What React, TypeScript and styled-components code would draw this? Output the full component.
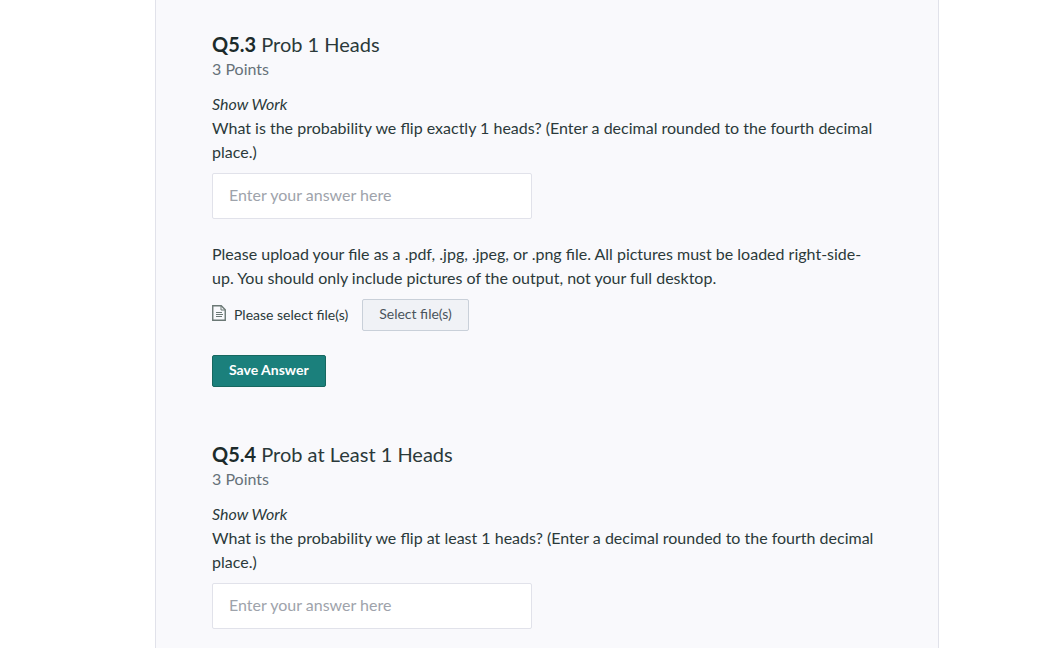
import React from "react";
import styled, { createGlobalStyle } from "styled-components";

const GlobalStyle = createGlobalStyle`
  *, *::before, *::after { box-sizing: border-box; }
  body {
    margin: 0;
    background: #ffffff;
    color: #2b393a;
    font-family: Lato, "Liberation Sans", sans-serif;
    font-size: 16px;
    font-weight: 400;
    line-height: 24px;
  }
`;

const Page = styled.div`
  display: flex;
  justify-content: center;
  min-height: 100vh;
  padding-left: 30px;
`;

const Outline = styled.main`
  display: flex;
  flex-direction: column;
  gap: 55px;
  width: 100%;
  max-width: 784px;
  padding: 32px 56px 0;
  background: #f9f9fc;
  border: solid #e1e2ea;
  border-width: 0 1px;
`;

const Question = styled.section`
  display: flex;
  flex-direction: column;
`;

const Title = styled.h2`
  margin: 0;
  font-size: 20px;
  font-weight: 400;
  line-height: 25px;

  b {
    color: #1c2b2b;
    font-weight: 700;
  }
`;

const Points = styled.p`
  margin: 0 0 12px;
  color: #667179;
  line-height: 23px;
`;

const Prompt = styled.p`
  margin: 0 0 9px;
`;

const AnswerInput = styled.input`
  width: 320px;
  max-width: 100%;
  height: 46px;
  padding: 0 16px 3px;
  border: 1px solid #e1e2ea;
  border-radius: 2px;
  background: #ffffff;
  color: inherit;
  font: inherit;

  &::placeholder {
    color: #9ea3ab;
    opacity: 1;
  }
`;

const Upload = styled.div`
  margin: 23px 0 24px;
`;

const FileRow = styled.div`
  display: flex;
  align-items: center;
  font-size: 14px;
`;

const FileIcon = styled.svg`
  width: 14px;
  height: 16px;
  margin: 0 8px 4px 0;
`;

const FileLabel = styled.span`
  margin-right: 14px;
`;

const Button = styled.button<{ $primary?: boolean }>`
  align-self: flex-start;
  height: 32px;
  padding: 0 16px 3px;
  border: 1px solid ${(p) => (p.$primary ? "#176860" : "#c9d0d9")};
  border-radius: 2px;
  background: ${(p) => (p.$primary ? "#1b807c" : "#f0f2f6")};
  color: ${(p) => (p.$primary ? "#ffffff" : "#4a545c")};
  font-family: inherit;
  font-size: 14px;
  font-weight: ${(p) => (p.$primary ? 700 : 400)};
  cursor: pointer;
`;

type QuestionData = {
  id: string;
  title: string;
  points: string;
  prompt: string;
  upload?: string;
};

const questions: QuestionData[] = [
  {
    id: "Q5.3",
    title: "Prob 1 Heads",
    points: "3 Points",
    prompt:
      "What is the probability we flip exactly 1 heads? (Enter a decimal rounded to the fourth decimal place.)",
    upload:
      "Please upload your file as a .pdf, .jpg, .jpeg, or .png file. All pictures must be loaded right-side-up. You should only include pictures of the output, not your full desktop.",
  },
  {
    id: "Q5.4",
    title: "Prob at Least 1 Heads",
    points: "3 Points",
    prompt:
      "What is the probability we flip at least 1 heads? (Enter a decimal rounded to the fourth decimal place.)",
  },
];

function DocumentIcon() {
  return (
    <FileIcon viewBox="0 0 14 16" fill="none" stroke="#6b7875" aria-hidden="true">
      <path d="M.75.75h8.5l4 4v10.5H.75z" strokeWidth="1.4" />
      <path d="M9 1v4h4" />
      <path d="M4 7.5h6M4 9.5h7M4 11.5h6" />
    </FileIcon>
  );
}

function QuestionBlock({ question }: { question: QuestionData }) {
  const inputId = `answer-${question.id}`;
  return (
    <Question>
      <Title>
        <b>{question.id}</b> {question.title}
      </Title>
      <Points>{question.points}</Points>
      <Prompt>
        <em>Show Work</em>
        <br />
        <label htmlFor={inputId}>{question.prompt}</label>
      </Prompt>
      <AnswerInput id={inputId} type="text" placeholder="Enter your answer here" />
      {question.upload && (
        <>
          <Upload>
            <Prompt>{question.upload}</Prompt>
            <FileRow>
              <DocumentIcon />
              <FileLabel>Please select file(s)</FileLabel>
              <Button type="button">Select file(s)</Button>
            </FileRow>
          </Upload>
          <Button type="submit" $primary>
            Save Answer
          </Button>
        </>
      )}
    </Question>
  );
}

export default function App() {
  return (
    <>
      <GlobalStyle />
      <Page>
        <Outline>
          {questions.map((question) => (
            <QuestionBlock key={question.id} question={question} />
          ))}
        </Outline>
      </Page>
    </>
  );
}
